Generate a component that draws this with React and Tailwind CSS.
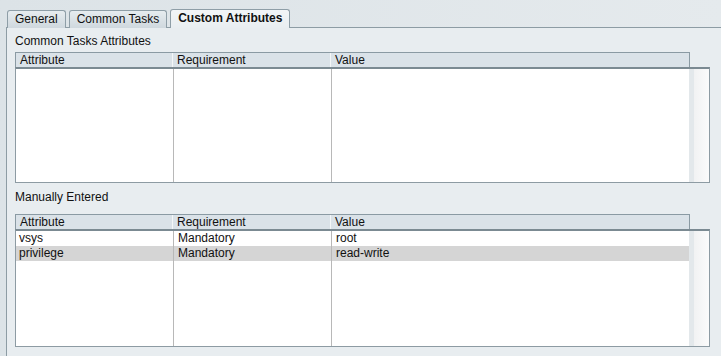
import React from "react";

function Table({ rows, bodyH }) {
  return (
    <div className="w-[695px]">
      <div className="flex w-[675px] h-[15px] border border-b-0 border-[#8a9aa3] bg-[#dae2e8] leading-[15px]">
        <div className="w-[157px] pl-[4px] border-r border-r-[#f4f7f8]">Attribute</div>
        <div className="w-[158px] pl-[4px] border-r border-r-[#f4f7f8]">Requirement</div>
        <div className="flex-1 pl-[4px]">Value</div>
      </div>
      <div className="flex border-t-2 border-t-[#7b8a92] border-x border-b border-[#8d9ba3]" style={{ height: bodyH }}>
        <div className="relative w-[673px] bg-white">
          <div className="absolute left-[157px] top-0 bottom-0 w-px bg-[#b8b8b8]" />
          <div className="absolute left-[315px] top-0 bottom-0 w-px bg-[#b8b8b8]" />
          {rows.map((r, i) => (
            <div
              key={i}
              className={`relative flex h-[15px] leading-[15px] ${i % 2 === 1 ? "bg-[#d5d5d5]" : ""}`}
            >
              <div className="w-[157px] pl-[3px]">{r[0]}</div>
              <div className="w-[158px] pl-[4px] border-l border-[#b8b8b8]">{r[1]}</div>
              <div className="flex-1 pl-[4px] border-l border-[#b8b8b8]">{r[2]}</div>
            </div>
          ))}
        </div>
        <div className="w-[5px] bg-[#e3e8eb]" />
        <div className="flex-1 bg-gradient-to-r from-[#f1f2f3] to-[#fbfbfb]" />
      </div>
    </div>
  );
}

export default function App() {
  return (
    <div
      className="w-[721px] h-[356px] overflow-hidden bg-gradient-to-r from-[#dce3e7] to-[#e5eaed] text-[12px] text-[#111]"
      style={{ fontFamily: '"Liberation Sans", Arial, sans-serif' }}
    >
      <div className="flex items-end h-[27px] pl-[7px] gap-[3px]">
        <div className="h-[18px] px-[7px] leading-[17px] border border-b-0 border-[#8e9ea7] rounded-t-[3px] bg-gradient-to-b from-[#e6ecef] to-[#cfd8de] -mb-px">
          General
        </div>
        <div className="h-[18px] px-[7px] leading-[17px] border border-b-0 border-[#8e9ea7] rounded-t-[3px] bg-gradient-to-b from-[#e6ecef] to-[#cfd8de] -mb-px">
          Common Tasks
        </div>
        <div className="relative z-10 h-[19px] px-[7px] leading-[17px] font-bold border border-b-0 border-[#8e9ea7] rounded-t-[3px] bg-gradient-to-b from-[#f2f5f7] to-[#e9eef1] -mb-px">
          Custom Attributes
        </div>
      </div>
      <div className="ml-[6px] h-[329px] border-l border-t border-[#8d9ca4] bg-[#e8edf0] pl-[8px]">
        <div className="pt-[6px] h-[24px] leading-[14px]">Common Tasks Attributes</div>
        <Table rows={[]} bodyH={116} />
        <div className="pt-[7px] h-[31px] leading-[14px]">Manually Entered</div>
        <Table
          rows={[
            ["vsys", "Mandatory", "root"],
            ["privilege", "Mandatory", "read-write"],
          ]}
          bodyH={118}
        />
      </div>
    </div>
  );
}
